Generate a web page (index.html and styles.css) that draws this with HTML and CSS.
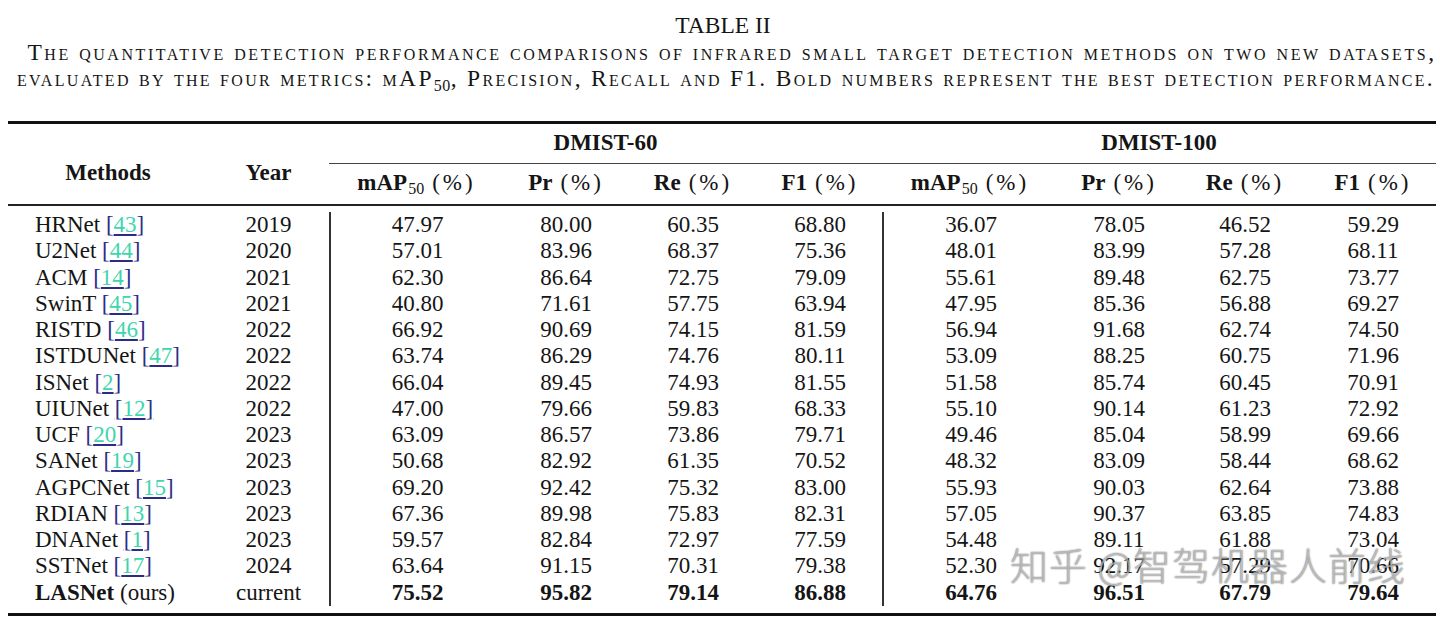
FILE: index.html
```html
<!DOCTYPE html>
<html lang="en">
<head>
<meta charset="utf-8">
<title>Table II</title>
<link rel="stylesheet" href="styles.css">
</head>
<body>
<div class="page">
  <div class="title">TABLE II</div>
  <div class="caption">
    <div class="cap-line l1">The quantitative detection performance comparisons of infrared small target detection methods on two new datasets,</div>
    <div class="cap-line l2">evaluated by the four metrics: mAP<span class="csub">50</span>, Precision, Recall and F1. Bold numbers represent the best detection performance.</div>
  </div>

  <div class="tbl">
    <div class="thead">
      <div class="h-methods">Methods</div>
      <div class="h-year">Year</div>
      <div class="h-group g1">DMIST-60</div>
      <div class="h-group g2">DMIST-100</div>
      <div class="h-col c3"><b>mAP</b><span class="sub">50</span> <span class="pct">(%)</span></div>
      <div class="h-col"><b>Pr</b> <span class="pct">(%)</span></div>
      <div class="h-col"><b>Re</b> <span class="pct">(%)</span></div>
      <div class="h-col"><b>F1</b> <span class="pct">(%)</span></div>
      <div class="h-col"><b>mAP</b><span class="sub">50</span> <span class="pct">(%)</span></div>
      <div class="h-col"><b>Pr</b> <span class="pct">(%)</span></div>
      <div class="h-col"><b>Re</b> <span class="pct">(%)</span></div>
      <div class="h-col"><b>F1</b> <span class="pct">(%)</span></div>
    </div>

    <div class="tbody">
      <div class="m">HRNet <a class="cite"><span class="br">[</span>43<span class="br">]</span></a></div><div>2019</div><div class="vl">47.97</div><div>80.00</div><div>60.35</div><div>68.80</div><div class="vl">36.07</div><div>78.05</div><div>46.52</div><div>59.29</div>
      <div class="m">U2Net <a class="cite"><span class="br">[</span>44<span class="br">]</span></a></div><div>2020</div><div class="vl">57.01</div><div>83.96</div><div>68.37</div><div>75.36</div><div class="vl">48.01</div><div>83.99</div><div>57.28</div><div>68.11</div>
      <div class="m">ACM <a class="cite"><span class="br">[</span>14<span class="br">]</span></a></div><div>2021</div><div class="vl">62.30</div><div>86.64</div><div>72.75</div><div>79.09</div><div class="vl">55.61</div><div>89.48</div><div>62.75</div><div>73.77</div>
      <div class="m">SwinT <a class="cite"><span class="br">[</span>45<span class="br">]</span></a></div><div>2021</div><div class="vl">40.80</div><div>71.61</div><div>57.75</div><div>63.94</div><div class="vl">47.95</div><div>85.36</div><div>56.88</div><div>69.27</div>
      <div class="m">RISTD <a class="cite"><span class="br">[</span>46<span class="br">]</span></a></div><div>2022</div><div class="vl">66.92</div><div>90.69</div><div>74.15</div><div>81.59</div><div class="vl">56.94</div><div>91.68</div><div>62.74</div><div>74.50</div>
      <div class="m">ISTDUNet <a class="cite"><span class="br">[</span>47<span class="br">]</span></a></div><div>2022</div><div class="vl">63.74</div><div>86.29</div><div>74.76</div><div>80.11</div><div class="vl">53.09</div><div>88.25</div><div>60.75</div><div>71.96</div>
      <div class="m">ISNet <a class="cite"><span class="br">[</span>2<span class="br">]</span></a></div><div>2022</div><div class="vl">66.04</div><div>89.45</div><div>74.93</div><div>81.55</div><div class="vl">51.58</div><div>85.74</div><div>60.45</div><div>70.91</div>
      <div class="m">UIUNet <a class="cite"><span class="br">[</span>12<span class="br">]</span></a></div><div>2022</div><div class="vl">47.00</div><div>79.66</div><div>59.83</div><div>68.33</div><div class="vl">55.10</div><div>90.14</div><div>61.23</div><div>72.92</div>
      <div class="m">UCF <a class="cite"><span class="br">[</span>20<span class="br">]</span></a></div><div>2023</div><div class="vl">63.09</div><div>86.57</div><div>73.86</div><div>79.71</div><div class="vl">49.46</div><div>85.04</div><div>58.99</div><div>69.66</div>
      <div class="m">SANet <a class="cite"><span class="br">[</span>19<span class="br">]</span></a></div><div>2023</div><div class="vl">50.68</div><div>82.92</div><div>61.35</div><div>70.52</div><div class="vl">48.32</div><div>83.09</div><div>58.44</div><div>68.62</div>
      <div class="m">AGPCNet <a class="cite"><span class="br">[</span>15<span class="br">]</span></a></div><div>2023</div><div class="vl">69.20</div><div>92.42</div><div>75.32</div><div>83.00</div><div class="vl">55.93</div><div>90.03</div><div>62.64</div><div>73.88</div>
      <div class="m">RDIAN <a class="cite"><span class="br">[</span>13<span class="br">]</span></a></div><div>2023</div><div class="vl">67.36</div><div>89.98</div><div>75.83</div><div>82.31</div><div class="vl">57.05</div><div>90.37</div><div>63.85</div><div>74.83</div>
      <div class="m">DNANet <a class="cite"><span class="br">[</span>1<span class="br">]</span></a></div><div>2023</div><div class="vl">59.57</div><div>82.84</div><div>72.97</div><div>77.59</div><div class="vl">54.48</div><div>89.11</div><div>61.88</div><div>73.04</div>
      <div class="m">SSTNet <a class="cite"><span class="br">[</span>17<span class="br">]</span></a></div><div>2024</div><div class="vl">63.64</div><div>91.15</div><div>70.31</div><div>79.38</div><div class="vl">52.30</div><div>92.17</div><div>57.29</div><div>70.66</div>
      <div class="m"><b>LASNet</b> (ours)</div><div>current</div><div class="vl b">75.52</div><div class="b">95.82</div><div class="b">79.14</div><div class="b">86.88</div><div class="vl b">64.76</div><div class="b">96.51</div><div class="b">67.79</div><div class="b">79.64</div>
    </div>
  </div>

  <div class="watermark">知乎 @智驾机器人前线</div>
</div>
</body>
</html>
```

FILE: styles.css
```css
html, body {
  margin: 0;
  padding: 0;
  background: #ffffff;
}

.page {
  position: relative;
  width: 1440px;
  height: 623px;
  overflow: hidden;
  font-family: "Liberation Serif", "Times New Roman", serif;
  color: #151515;
}

.title {
  padding-top: 11px;
  height: 28px;
  font-size: 23.5px;
  line-height: 28px;
  text-align: center;
  padding-left: 6px;
}

.caption {
  font-variant: small-caps;
  font-size: 23.5px;
  line-height: 26px;
  text-align: center;
}

.cap-line {
  white-space: nowrap;
}

.cap-line.l1 {
  padding-left: 24px;
  letter-spacing: 2.55px;
}

.cap-line.l2 {
  padding-left: 12px;
  letter-spacing: 2.3px;
}

.csub {
  font-variant: normal;
  font-size: 16px;
  position: relative;
  top: 5px;
  letter-spacing: 0.5px;
}

.tbl {
  margin: 27px 4px 0 8px;
  width: 1428px;
  border-top: 3px solid #111;
  border-bottom: 3px solid #111;
  font-size: 23px;
}

.thead,
.tbody {
  display: grid;
  grid-template-columns: 200px 121px 175px 124px 130px 124px 176px 122px 130px 126px;
}

.thead {
  grid-template-rows: 40px 40px;
  border-bottom: 2px solid #222;
}

.h-methods,
.h-year {
  grid-row: 1 / span 2;
  display: flex;
  align-items: center;
  justify-content: center;
  font-weight: bold;
  padding-top: 18px;
}

.h-group {
  grid-column: span 4;
  display: flex;
  align-items: center;
  justify-content: center;
  font-weight: bold;
  border-bottom: 1.5px solid #444;
  padding-bottom: 1px;
}

.h-col {
  display: flex;
  align-items: center;
  justify-content: center;
  white-space: nowrap;
  padding-bottom: 2px;
}

.h-col b {
  font-weight: bold;
}

.sub {
  font-size: 16px;
  position: relative;
  top: 6px;
  margin-left: 1px;
}

.pct {
  margin-left: 8px;
  letter-spacing: 3px;
}

.tbody {
  grid-auto-rows: 26.25px;
  padding: 6px 0 7px;
  line-height: 26.25px;
}

.tbody > div {
  text-align: center;
  white-space: nowrap;
}

.tbody > div.m {
  text-align: left;
  padding-left: 27px;
}

.tbody > div.vl {
  border-left: 2px solid #333;
}

.tbody > div.b {
  font-weight: bold;
}

.cite {
  text-decoration: underline;
  text-decoration-color: #2c2c86;
  text-decoration-thickness: 1.5px;
  text-underline-offset: 2px;
  color: #3ed6ad;
}

.cite .br {
  color: #2c2c86;
}

.watermark {
  position: absolute;
  left: 1010px;
  top: 539px;
  font-family: "Noto Sans CJK SC", sans-serif;
  font-weight: 300;
  font-size: 38px;
  line-height: 50px;
  color: rgba(255, 255, 255, 0.55);
  text-shadow: 0 0 1.5px rgba(0, 0, 0, 0.5), 0 0 1px rgba(0, 0, 0, 0.35);
  white-space: nowrap;
  letter-spacing: 1px;
}
```
